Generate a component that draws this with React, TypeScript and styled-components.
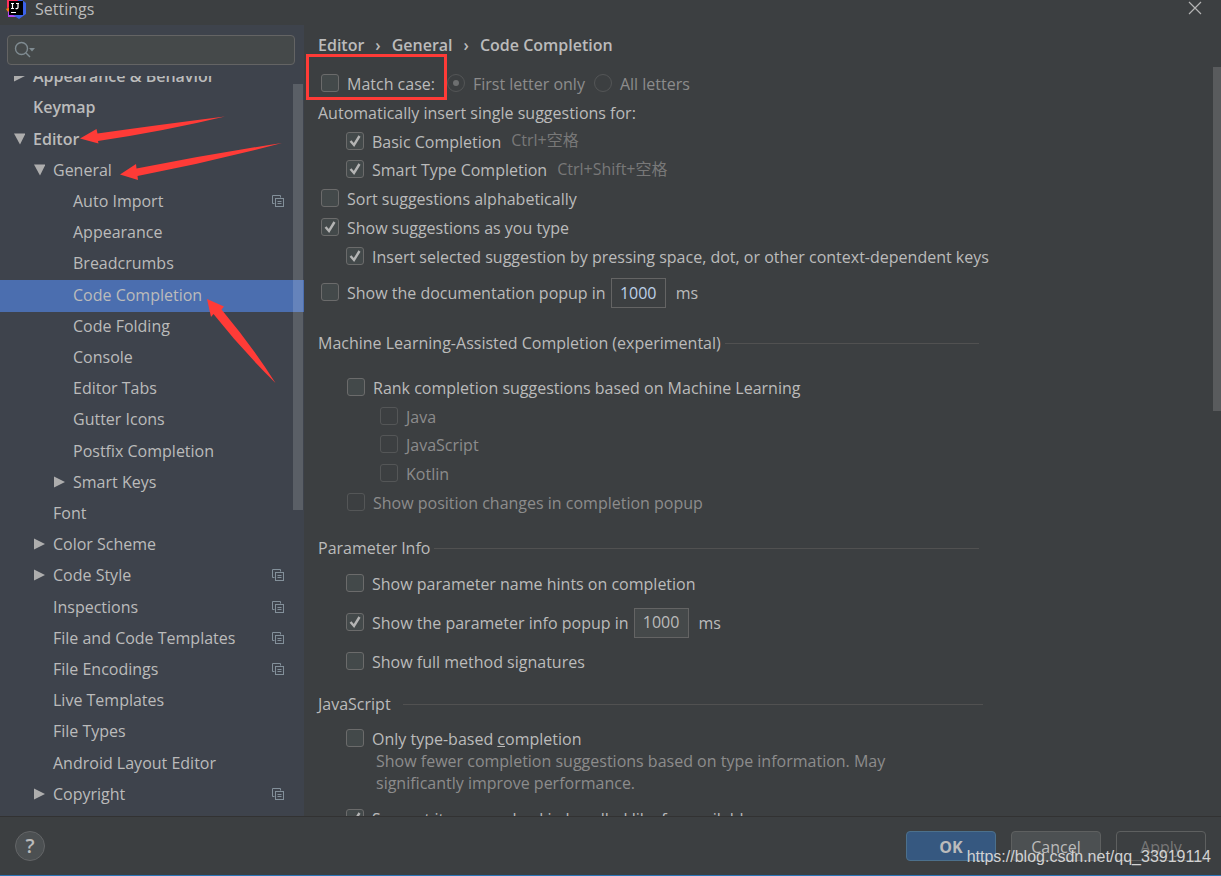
import React from 'react';
import styled, { createGlobalStyle, css } from 'styled-components';

const c = {
  panel: '#3c3f41',
  sidebar: '#3e434c',
  text: '#bbbbbb',
  dim: '#8c8c8c',
  hint: '#787878',
  line: '#515151',
  border: '#6b6b6b',
  field: '#45494a',
  select: '#4b6eaf',
  mark: '#ff3b37',
};

const GlobalStyle = createGlobalStyle`
  *, *::before, *::after { box-sizing: border-box; }
  body {
    margin: 0;
    background: ${c.panel};
    color: ${c.text};
    font: 16px/22px "Open Sans", "Noto Sans CJK SC", sans-serif;
  }
  input, button { font: inherit; color: inherit; }
`;

const Window = styled.div`
  position: relative;
  display: flex;
  flex-direction: column;
  height: 100vh;
  overflow: hidden;
  border-bottom: 1px solid #2a75b8;
`;

const TitleBar = styled.header`
  display: flex;
  flex: none;
  align-items: flex-start;
  height: 25px;
  padding: 0 19px 0 5px;
`;

const Title = styled.h1`
  flex: 1;
  margin: 0 0 0 9px;
  font-size: 16px;
  font-weight: 400;
  line-height: 18px;
`;

const CloseButton = styled.button`
  display: flex;
  padding: 1px 0;
  border: 0;
  background: none;
`;

const Main = styled.div`
  display: flex;
  flex: 1;
  min-height: 0;
`;

const Sidebar = styled.nav`
  position: relative;
  display: flex;
  flex: none;
  flex-direction: column;
  width: 304px;
  background: ${c.sidebar};
`;

const SearchBox = styled.label`
  display: flex;
  align-items: center;
  gap: 4px;
  height: 30px;
  margin: 10px 9px 11px 7px;
  padding: 0 6px;
  border: 1px solid #646464;
  border-radius: 4px;
  background: ${c.field};
`;

const SearchInput = styled.input`
  flex: 1;
  min-width: 0;
  padding: 0;
  border: 0;
  outline: 0;
  background: none;
`;

const TreeViewport = styled.div`
  flex: 1;
  min-height: 0;
  overflow: hidden;
`;

const Tree = styled.ul`
  display: grid;
  grid-auto-rows: 1fr;
  height: 749px;
  margin: -14px 0 0;
  padding: 0;
  list-style: none;
`;

const TreeItem = styled.li<{ $level: number; $bold?: boolean; $selected?: boolean }>`
  display: flex;
  align-items: center;
  padding: 0 20px 3px ${p => 13 + p.$level * 20}px;
  font-weight: ${p => (p.$bold ? 600 : 400)};
  background: ${p => (p.$selected ? c.select : 'transparent')};
`;

const Arrow = styled.span`
  display: flex;
  width: 20px;
`;

const ItemLabel = styled.span`
  flex: 1;
  white-space: nowrap;
`;

const Thumb = styled.div<{ $side: 'tree' | 'page' }>`
  position: absolute;
  background: rgba(255, 255, 255, 0.15);
  ${p =>
    p.$side === 'tree'
      ? css`top: 59px; right: 1px; width: 10px; height: 426px;`
      : css`top: 42px; right: 0; width: 8px; height: 344px;`}
`;

const Content = styled.main`
  position: relative;
  flex: 1;
  min-width: 0;
  overflow: hidden;
  padding: 9px 14px 0;
`;

const Breadcrumbs = styled.ol`
  display: flex;
  gap: 11px;
  margin: 0 0 13px;
  padding: 0;
  font-weight: 600;
  list-style: none;
`;

const Row = styled.div<{ $indent?: number; $h?: number }>`
  display: flex;
  align-items: center;
  height: ${p => p.$h ?? 29}px;
  padding-left: ${p => p.$indent ?? 0}px;
  white-space: nowrap;
`;

const Choice = styled.label<{ $off?: boolean }>`
  display: flex;
  align-items: center;
  gap: 8px;
  color: ${p => (p.$off ? c.dim : c.text)};
`;

const BoxCell = styled.span`
  display: grid;
  margin-bottom: 2px;
  > * { grid-area: 1 / 1; margin: 0; }
  svg { pointer-events: none; }
`;

const Tick = styled.input<{ $round?: boolean }>`
  appearance: none;
  width: 18px;
  height: 18px;
  border: 1px solid ${c.border};
  border-radius: ${p => (p.$round ? '50%' : '3px')};
  background: #43494a;
  &:disabled { border-color: #545657; background: none; }
`;

const Shortcut = styled.span`
  margin: 0 0 3px 10px;
  color: ${c.hint};
`;

const NumberField = styled.input<{ $plain?: boolean }>`
  width: 55px;
  height: 30px;
  margin: 0 10px 0 5px;
  padding: 0 0 1px;
  border: 1px solid #646464;
  text-align: center;
  background: ${p => (p.$plain ? 'none' : c.field)};
  color: ${p => (p.$plain ? '#bcd0e8' : c.text)};
`;

const SectionTitle = styled.h2<{ $wide?: boolean }>`
  display: flex;
  align-items: center;
  gap: ${p => (p.$wide ? 12 : 4)}px;
  max-width: ${p => (p.$wide ? 665 : 661)}px;
  height: 22px;
  margin: 0;
  font-size: 16px;
  font-weight: 400;
  &::after { content: ''; flex: 1; border-top: 1px solid ${c.line}; }
`;

const Section = styled.section<{ $top: number; $gap: number }>`
  margin-top: ${p => p.$top}px;
  > h2 { margin-bottom: ${p => p.$gap}px; }
`;

const Description = styled.p`
  max-width: 580px;
  margin: -3px 0 10px;
  padding-left: 58px;
  color: ${c.dim};
`;

const Footer = styled.footer`
  display: flex;
  flex: none;
  align-items: center;
  gap: 15px;
  height: 59px;
  padding: 0 15px;
  border-top: 1px solid #323232;
`;

const HelpButton = styled.button`
  width: 30px;
  height: 30px;
  margin-right: auto;
  padding: 0;
  border: 1px solid #636567;
  border-radius: 50%;
  background: #4c5052;
  font-size: 20px;
  font-weight: 600;
  line-height: 28px;
`;

const Button = styled.button<{ $kind?: 'primary' | 'off' }>`
  width: 90px;
  height: 30px;
  padding: 2px 0 0;
  border: 1px solid #5e6060;
  border-radius: 4px;
  background: #4c5052;
  ${p => p.$kind === 'primary' && css`border-color: #4c708c; background: #365880; font-weight: 700;`}
  ${p => p.$kind === 'off' && css`background: none; color: #777777;`}
`;

const Highlight = styled.div`
  position: absolute;
  top: 54px;
  left: 306px;
  width: 141px;
  height: 46px;
  border: 3px solid ${c.mark};
  pointer-events: none;
`;

const Pointers = styled.svg`
  position: absolute;
  top: 0;
  left: 0;
  pointer-events: none;
`;

const Watermark = styled.div`
  position: absolute;
  right: 10px;
  bottom: 8px;
  color: #d2d2d2;
  font: 16px/20px "Liberation Sans", sans-serif;
`;

const Logo = () => (
  <svg width="21" height="19" viewBox="0 0 21 19" aria-hidden="true">
    <path d="M2 0h12l-3 6-9 2z" fill="#fe315d" />
    <path d="M1 9l4-2 3 7-3 1z" fill="#f97a12" />
    <path d="M3 12l5-6 9 8-4 3H3z" fill="#b345f1" />
    <path d="M13 0h4l4 3v11l-7 5-6-4z" fill="#3c62e8" />
    <rect x="4" y="1" width="14" height="14" />
    <path d="M6 3.500h3M7.500 3.500v5M6 8.500h3M11 3.500h3M13 3.500v4q0 1.200-2.500 1" stroke="#fff" strokeWidth="1.200" fill="none" />
    <path d="M6 12.500h5" stroke="#fff" />
  </svg>
);

const ScopeIcon = () => (
  <svg width="12" height="12" viewBox="0 0 12 12" fill="none" stroke="#83909a" aria-hidden="true">
    <path d="M2.500 8.500h-2v-8h8v2" />
    <rect x="3.500" y="3.500" width="8" height="8" />
    <path d="M5.500 6.500h4M5.500 8.500h4" />
  </svg>
);

const Triangle = ({ open }: { open: boolean }) => (
  <svg width="12" height="12" viewBox="0 0 12 12" fill="#adadad" aria-hidden="true">
    <path d={open ? 'M1 0.500h11.500L7 11.500z' : 'M1 0.500L12 6L1 11.500z'} />
  </svg>
);

type Node = { t: string; l: number; a?: 'open' | 'shut'; b?: boolean; s?: boolean; i?: boolean };

const nodes: Node[] = [
  { t: 'Appearance & Behavior', l: 0, a: 'shut', b: true },
  { t: 'Keymap', l: 0, b: true },
  { t: 'Editor', l: 0, a: 'open', b: true },
  { t: 'General', l: 1, a: 'open' },
  { t: 'Auto Import', l: 2, i: true },
  { t: 'Appearance', l: 2 },
  { t: 'Breadcrumbs', l: 2 },
  { t: 'Code Completion', l: 2, s: true },
  { t: 'Code Folding', l: 2 },
  { t: 'Console', l: 2 },
  { t: 'Editor Tabs', l: 2 },
  { t: 'Gutter Icons', l: 2 },
  { t: 'Postfix Completion', l: 2 },
  { t: 'Smart Keys', l: 2, a: 'shut' },
  { t: 'Font', l: 1 },
  { t: 'Color Scheme', l: 1, a: 'shut' },
  { t: 'Code Style', l: 1, a: 'shut', i: true },
  { t: 'Inspections', l: 1, i: true },
  { t: 'File and Code Templates', l: 1, i: true },
  { t: 'File Encodings', l: 1, i: true },
  { t: 'Live Templates', l: 1 },
  { t: 'File Types', l: 1 },
  { t: 'Android Layout Editor', l: 1 },
  { t: 'Copyright', l: 1, a: 'shut', i: true },
];

type CheckProps = { children: React.ReactNode; on?: boolean; off?: boolean };

const Check = ({ children, on, off }: CheckProps) => (
  <Choice $off={off}>
    <BoxCell>
      <Tick type="checkbox" defaultChecked={on} disabled={off} />
      {on && (
        <svg width="18" height="18" viewBox="0 0 18 18" fill="none" stroke="#b4b4b4" strokeWidth="2.400" aria-hidden="true">
          <path d="M4.500 9L8 13L13.500 4" />
        </svg>
      )}
    </BoxCell>
    {children}
  </Choice>
);

const Radio = ({ children, on }: CheckProps) => (
  <Choice $off>
    <BoxCell>
      <Tick type="radio" name="match" $round defaultChecked={on} disabled />
      {on && (
        <svg width="18" height="18" viewBox="0 0 18 18" fill="#6d6f70" aria-hidden="true">
          <circle cx="9" cy="9" r="3" />
        </svg>
      )}
    </BoxCell>
    {children}
  </Choice>
);

const RadioGroup = styled.div`
  display: flex;
  gap: 9px;
  margin-left: 12px;
`;

export default function App() {
  return (
    <Window>
      <GlobalStyle />
      <TitleBar>
        <Logo />
        <Title>Settings</Title>
        <CloseButton aria-label="Close">
          <svg width="14" height="14" viewBox="0 0 14 14" stroke="#b4b4b4" strokeWidth="1.200" aria-hidden="true">
            <path d="M1 1l12 12M13 1L1 13" />
          </svg>
        </CloseButton>
      </TitleBar>
      <Main>
        <Sidebar>
          <SearchBox>
            <svg width="22" height="18" viewBox="0 0 22 18" fill="none" stroke="#7f8b91" strokeWidth="1.400" aria-hidden="true">
              <circle cx="7.500" cy="7.500" r="6" />
              <path d="M12 12l4 4" />
              <path d="M15 7h6l-3 3.500z" fill="#7f8b91" stroke="none" />
            </svg>
            <SearchInput aria-label="Search settings" />
          </SearchBox>
          <TreeViewport>
            <Tree>
              {nodes.map(n => (
                <TreeItem key={n.t + n.l} $level={n.l} $bold={n.b} $selected={n.s}>
                  <Arrow>{n.a && <Triangle open={n.a === 'open'} />}</Arrow>
                  <ItemLabel>{n.t}</ItemLabel>
                  {n.i && <ScopeIcon />}
                </TreeItem>
              ))}
            </Tree>
          </TreeViewport>
          <Thumb $side="tree" />
        </Sidebar>
        <Content>
          <Breadcrumbs>
            <li>Editor</li>
            <li aria-hidden="true">›</li>
            <li>General</li>
            <li aria-hidden="true">›</li>
            <li>Code Completion</li>
          </Breadcrumbs>
          <Row $indent={3}>
            <Check>Match case:</Check>
            <RadioGroup>
              <Radio on>First letter only</Radio>
              <Radio>All letters</Radio>
            </RadioGroup>
          </Row>
          <Row>Automatically insert single suggestions for:</Row>
          <Row $indent={28}>
            <Check on>Basic Completion</Check>
            <Shortcut>Ctrl+空格</Shortcut>
          </Row>
          <Row $indent={28} $h={28}>
            <Check on>Smart Type Completion</Check>
            <Shortcut>Ctrl+Shift+空格</Shortcut>
          </Row>
          <Row $indent={3}>
            <Check>Sort suggestions alphabetically</Check>
          </Row>
          <Row $indent={3}>
            <Check on>Show suggestions as you type</Check>
          </Row>
          <Row $indent={28}>
            <Check on>Insert selected suggestion by pressing space, dot, or other context-dependent keys</Check>
          </Row>
          <Row $indent={3} $h={44}>
            <Check>Show the documentation popup in</Check>
            <NumberField $plain defaultValue="1000" aria-label="Documentation popup delay" />
            ms
          </Row>

          <Section $top={17} $gap={19}>
            <SectionTitle>Machine Learning-Assisted Completion (experimental)</SectionTitle>
            <Row $indent={29}>
              <Check>Rank completion suggestions based on Machine Learning</Check>
            </Row>
            <Row $indent={62}>
              <Check off>Java</Check>
            </Row>
            <Row $indent={62} $h={28}>
              <Check off>JavaScript</Check>
            </Row>
            <Row $indent={62}>
              <Check off>Kotlin</Check>
            </Row>
            <Row $indent={29}>
              <Check off>Show position changes in completion popup</Check>
            </Row>
          </Section>

          <Section $top={20} $gap={5}>
            <SectionTitle>Parameter Info</SectionTitle>
            <Row $indent={28} $h={39}>
              <Check>Show parameter name hints on completion</Check>
            </Row>
            <Row $indent={28} $h={39}>
              <Check on>Show the parameter info popup in</Check>
              <NumberField defaultValue="1000" aria-label="Parameter info popup delay" />
              ms
            </Row>
            <Row $indent={28} $h={39}>
              <Check>Show full method signatures</Check>
            </Row>
          </Section>

          <Section $top={12} $gap={9}>
            <SectionTitle $wide>JavaScript</SectionTitle>
            <Row $indent={28}>
              <Check>
                <span>
                  Only type-based <u>c</u>ompletion
                </span>
              </Check>
            </Row>
            <Description>
              Show fewer completion suggestions based on type information. May significantly improve performance.
            </Description>
            <Row $indent={28}>
              <Check on>Suggest items resolved in bundled libs for available</Check>
            </Row>
          </Section>
          <Thumb $side="page" />
        </Content>
      </Main>
      <Footer>
        <HelpButton aria-label="Help">?</HelpButton>
        <Button $kind="primary">OK</Button>
        <Button>Cancel</Button>
        <Button $kind="off" disabled>
          Apply
        </Button>
      </Footer>
      <Highlight />
      <Pointers width="304" height="400" viewBox="0 0 304 400" fill={c.mark} aria-hidden="true">
        <path d="M80 138.500L96.500 129L97.500 133.500Q165 124 225 116.500Q165 131 98 141L98.500 143.500Z" />
        <path d="M120 174.500L136 164L136.500 168.500Q210 154 282 143Q210 162 137.500 176L138 180Z" />
        <path d="M207 299L224 306.500L221.500 309.500Q252 346 275.500 383Q242 350 213.500 314L211 317Z" />
      </Pointers>
      <Watermark>https://blog.csdn.net/qq_33919114</Watermark>
    </Window>
  );
}
